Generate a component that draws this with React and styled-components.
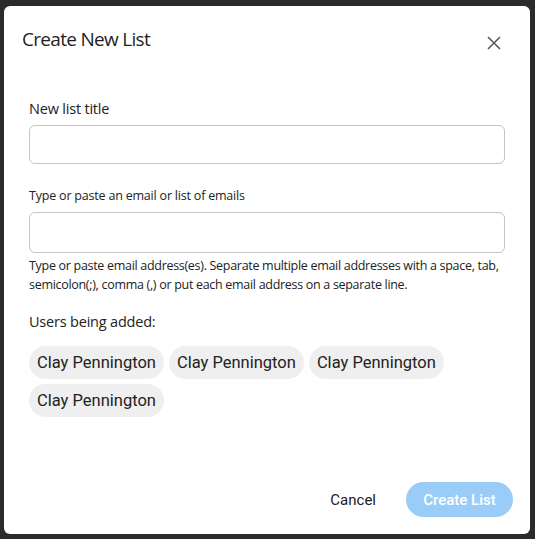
import React from "react";
import styled, { createGlobalStyle } from "styled-components";

const GlobalStyle = createGlobalStyle`
  html, body {
    margin: 0;
    padding: 0;
    background: #2b2b2b;
  }
  body {
    font-family: "Open Sans", "Noto Sans", sans-serif;
    color: #222;
  }
`;

const Backdrop = styled.div`
  padding: 6px 5px 5px 4px;
  box-sizing: border-box;
  height: 539px;
`;

const Dialog = styled.div`
  background: #fff;
  border-radius: 6px;
  height: 100%;
  display: flex;
  flex-direction: column;
  box-sizing: border-box;
`;

const Header = styled.div`
  display: flex;
  align-items: center;
  justify-content: space-between;
  padding: 19px 28px 0 18px;
  height: 47px;
  box-sizing: border-box;
`;

const Title = styled.h2`
  margin: 0;
  font-size: 19px;
  font-weight: 400;
  letter-spacing: -0.7px;
  color: #1f1f1f;
`;

const CloseButton = styled.button`
  border: none;
  background: none;
  padding: 0;
  width: 16px;
  height: 16px;
  display: flex;
  align-items: center;
  justify-content: center;
  cursor: pointer;
  margin-top: 8px;
`;

const Body = styled.div`
  flex: 1;
  padding: 0 25px;
  display: flex;
  flex-direction: column;
`;

const Label = styled.label`
  display: block;
  font-size: ${(p) => (p.small ? "12.5px" : "14.5px")};
  color: #222;
  letter-spacing: -0.2px;
  margin: ${(p) => p.margin};
`;

const Input = styled.input`
  display: block;
  width: 100%;
  height: ${(p) => p.h}px;
  box-sizing: border-box;
  border: 1px solid #c4c4c4;
  border-radius: 6px;
  outline: none;
  padding: 0 10px;
  font: inherit;
`;

const Help = styled.p`
  margin: 3px 0 0;
  font-size: 12.5px;
  line-height: 19px;
  letter-spacing: -0.3px;
  color: #222;
`;

const Chips = styled.div`
  display: flex;
  flex-wrap: wrap;
  gap: 5px;
  margin-top: 15px;
`;

const Chip = styled.span`
  font-family: Roboto, sans-serif;
  font-size: 16.5px;
  color: #222;
  background: #efefef;
  border-radius: 17px;
  height: 33px;
  padding: 0 8px;
  display: inline-flex;
  align-items: center;
`;

const Footer = styled.div`
  display: flex;
  justify-content: flex-end;
  align-items: center;
  gap: 30px;
  padding: 0 17px 17px 0;
`;

const TextButton = styled.button`
  font-family: Roboto, sans-serif;
  font-size: 15px;
  font-weight: 400;
  color: #222;
  border: none;
  background: none;
  padding: 0;
  cursor: pointer;
`;

const PrimaryButton = styled.button`
  font-family: Roboto, sans-serif;
  font-size: 15px;
  font-weight: 500;
  color: #fff;
  background: #99cdf8;
  border: none;
  border-radius: 18px;
  height: 35px;
  width: 107px;
  cursor: default;
`;

const users = ["Clay Pennington", "Clay Pennington", "Clay Pennington", "Clay Pennington"];

export default function App() {
  return (
    <>
      <GlobalStyle />
      <Backdrop>
        <Dialog>
          <Header>
            <Title>Create New List</Title>
            <CloseButton aria-label="Close">
              <svg width="14" height="14" viewBox="0 0 14 14">
                <path d="M1 1L13 13M13 1L1 13" stroke="#555" strokeWidth="1.5" fill="none" />
              </svg>
            </CloseButton>
          </Header>
          <Body>
            <Label margin="46px 0 7px">New list title</Label>
            <Input h={39} />
            <Label small margin="23px 0 8px">Type or paste an email or list of emails</Label>
            <Input h={41} />
            <Help>
              Type or paste email address(es). Separate multiple email addresses with a space, tab,
              semicolon(;), comma (,) or put each email address on a separate line.
            </Help>
            <Label margin="18px 0 0">Users being added:</Label>
            <Chips>
              {users.map((u, i) => (
                <Chip key={i}>{u}</Chip>
              ))}
            </Chips>
          </Body>
          <Footer>
            <TextButton>Cancel</TextButton>
            <PrimaryButton disabled>Create List</PrimaryButton>
          </Footer>
        </Dialog>
      </Backdrop>
    </>
  );
}
